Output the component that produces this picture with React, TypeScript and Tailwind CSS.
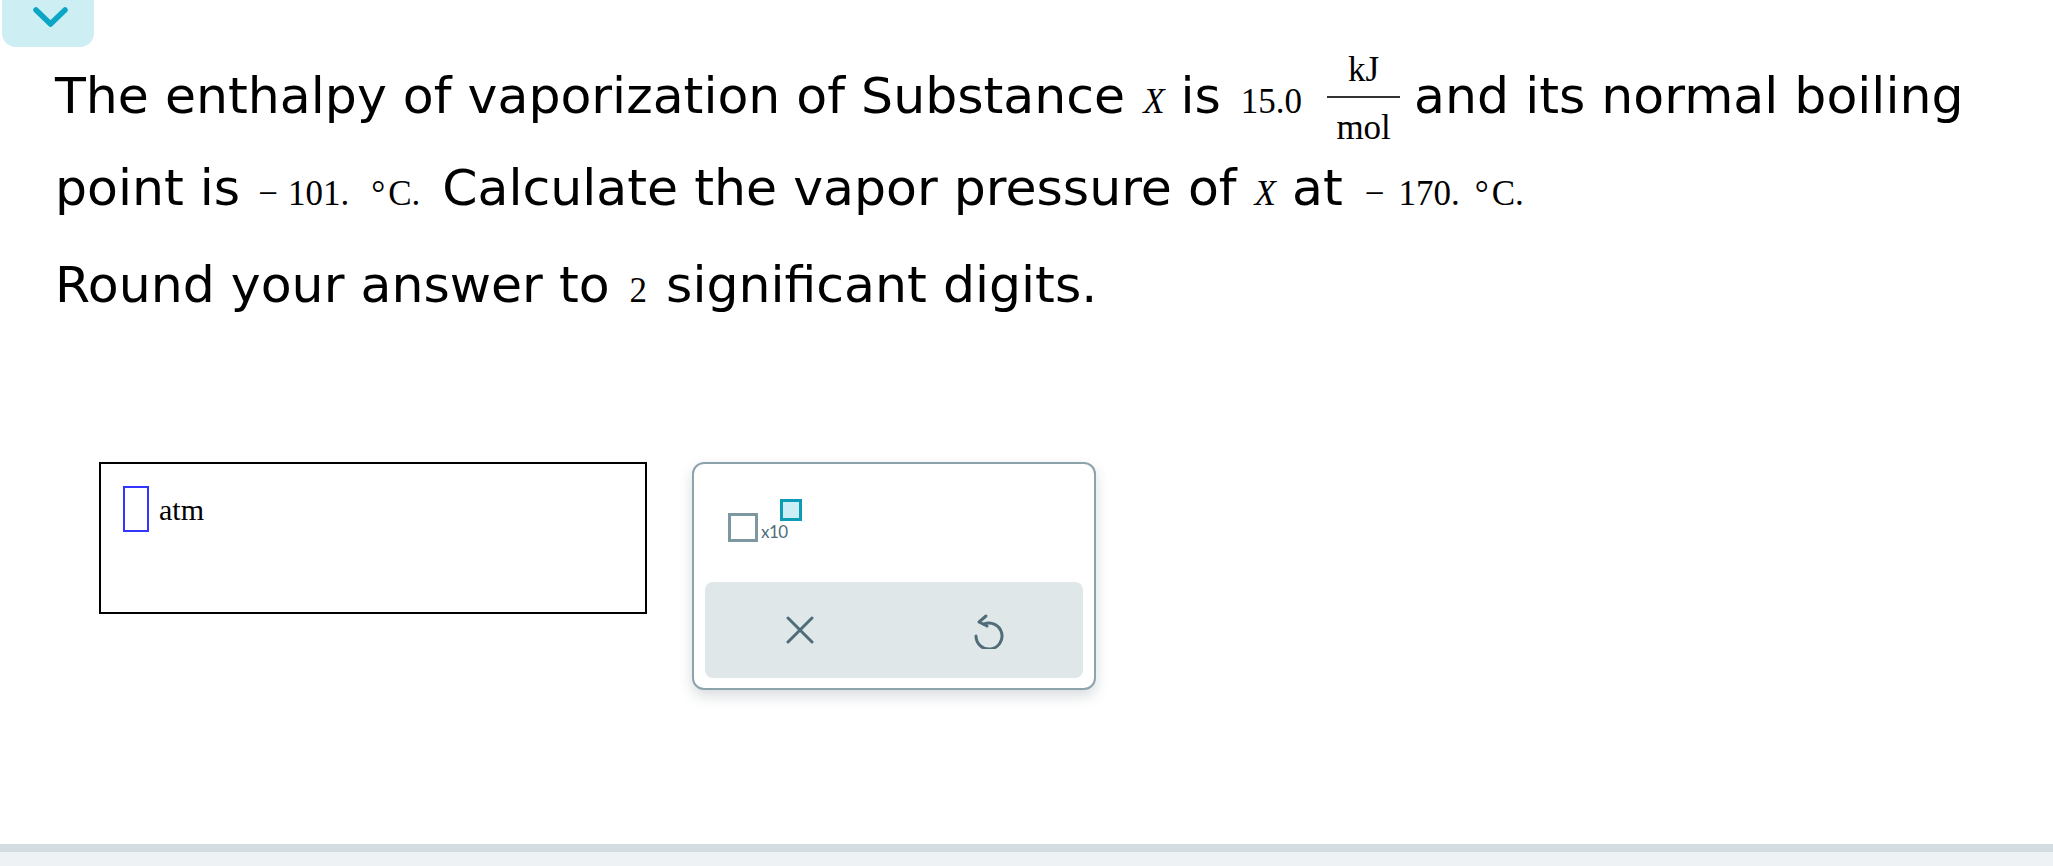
import React from "react";

const serif = "font-['Liberation_Serif','Times_New_Roman',serif]";

function M({ children, italic, className = "" }: { children: React.ReactNode; italic?: boolean; className?: string }) {
  return (
    <span className={`${serif} text-[35px] ${italic ? "italic" : ""} ${className}`}>{children}</span>
  );
}

function Frac() {
  return (
    <span className={`inline-flex flex-col items-center align-[32px] ${serif} text-[35px] leading-none ml-[25px] mr-[14px]`}>
      <span className="px-[4px]">kJ</span>
      <span className="block w-[73px] h-[2px] bg-[#333] mt-[9px]"></span>
      <span className="mt-[12px]">mol</span>
    </span>
  );
}

function UndoIcon() {
  return (
    <svg width="30" height="38" viewBox="0 0 30 38" fill="none" stroke="#4e6d78" strokeWidth="3" strokeLinecap="round" strokeLinejoin="round">
      <path d="M2 25 A13 13 0 1 0 10 13" />
      <path d="M12 5 L5 11 L13 15" />
    </svg>
  );
}

export default function App() {
  return (
    <div className="w-[2053px] h-[866px] bg-white flex flex-col font-['DejaVu_Sans',sans-serif] text-black overflow-hidden">
      <div className="ml-[2px] w-[92px] h-[47px] bg-[#cdeef3] rounded-b-[14px] flex items-center justify-center shrink-0">
        <svg width="92" height="47" viewBox="0 0 92 47" fill="none">
          <path d="M34 10 L48.5 24 L63 10" stroke="#0ba6c6" strokeWidth="5.5" strokeLinecap="round" strokeLinejoin="round" />
        </svg>
      </div>
      <div className="pl-[55px] text-[50.5px] leading-[92px] mt-[3px]">
        <div className="h-[92px] whitespace-nowrap">
          <span>The enthalpy of vaporization of Substance</span>
          <M italic className="ml-[18px] mr-[16px]">X</M>
          <span>is</span>
          <M className="ml-[20px]">15.0</M>
          <Frac />
          <span>and its normal boiling</span>
        </div>
        <div className="h-[92px] whitespace-nowrap">
          <span>point is</span>
          <M className="ml-[18px]">−</M>
          <M className="ml-[10px]">101.</M>
          <M className="ml-[22px]">°<span className="ml-[3px]">C.</span></M>
          <span className="ml-[22px]">Calculate the vapor pressure of</span>
          <M italic className="ml-[18px] mr-[16px]">X</M>
          <span>at</span>
          <M className="ml-[22px]">−</M>
          <M className="ml-[14px]">170.</M>
          <M className="ml-[15px]">°<span className="ml-[3px]">C.</span></M>
        </div>
        <div className="h-[92px] mt-[5px] whitespace-nowrap">
          <span>Round your answer to</span>
          <M className="ml-[20px] mr-[19px]">2</M>
          <span>significant digits.</span>
        </div>
      </div>
      <div className="flex items-start pl-[99px] mt-[131px]">
        <div className="w-[548px] h-[152px] border-2 border-black flex items-start pt-[22px] pl-[22px]">
          <div className="w-[26px] h-[46px] border-2 border-[#3434ff]"></div>
          <span className={`${serif} text-[30px] leading-none ml-[10px] mt-[9px]`}>atm</span>
        </div>
        <div className="ml-[45px] w-[404px] h-[228px] border-2 border-[#8da3ac] rounded-[12px] shadow-[0_6px_14px_rgba(40,60,70,0.18)] bg-white flex flex-col">
          <div className="h-[118px] relative">
            <div className="absolute left-[34px] top-[49px] w-[30px] h-[29px] border-[3px] border-[#7d98a1]"></div>
            <div className="absolute left-[86px] top-[35px] w-[22px] h-[22px] border-[3px] border-[#0e9bb6] bg-[#cdeef5]"></div>
            <span className="absolute left-[67px] top-[59px] text-[17px] leading-none font-['Lato',sans-serif] text-[#4e6d78] tracking-[-0.5px]">x10</span>
          </div>
          <div className="mx-[11px] h-[96px] bg-[#e0e7e9] rounded-[8px] grid grid-cols-2">
            <div className="flex items-center justify-center">
              <svg width="28" height="28" viewBox="0 0 28 28" fill="none" stroke="#4e6d78" strokeWidth="3" strokeLinecap="round">
                <path d="M2 2 L26 26 M26 2 L2 26" />
              </svg>
            </div>
            <div className="flex items-center justify-center">
              <UndoIcon />
            </div>
          </div>
        </div>
      </div>
      <div className="mt-auto h-[8px] bg-[#d3dce0] shrink-0"></div>
      <div className="h-[14px] bg-[#eef2f4] shrink-0"></div>
    </div>
  );
}
